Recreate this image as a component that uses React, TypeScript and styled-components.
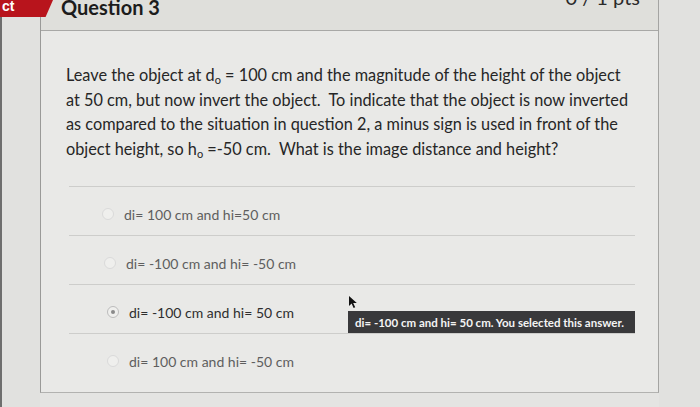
import * as React from "react";
import styled, { createGlobalStyle } from "styled-components";

interface IAnswer {
  id: number;
  text: string;
  selected?: boolean;
}

const answers: IAnswer[] = [
  { id: 1, text: "di= 100 cm and hi=50 cm" },
  { id: 2, text: "di= -100 cm and hi= -50 cm" },
  { id: 3, text: "di= -100 cm and hi= 50 cm", selected: true },
  { id: 4, text: "di= 100 cm and hi= -50 cm" },
];

const GlobalStyle = createGlobalStyle`
  html, body {
    margin: 0;
    padding: 0;
    background: #e4e4e2;
    font-family: Lato, "Open Sans", sans-serif;
    overflow: hidden;
  }
`;

export default function App() {
  const picked = answers.find((a) => a.selected);
  return (
    <>
      <GlobalStyle />
      <Page>
        <Tag>ct</Tag>
        <SideStrip />
        <Card>
          <Header>
            <Title>Question 3</Title>
            <Points>0 / 1 pts</Points>
          </Header>
          <Body>
            <QuestionText>
              Leave the object at d<sub>o</sub> = 100 cm and the magnitude of the height of the object
              <br />
              at 50 cm, but now invert the object.&nbsp; To indicate that the object is now inverted
              <br />
              as compared to the situation in question 2, a minus sign is used in front of the
              <br />
              object height, so h<sub>o</sub> =-50 cm.&nbsp; What is the image distance and height?
            </QuestionText>
            <AnswerList>
              {answers.map((a) => (
                <AnswerRow key={a.id} $shift={a.id > 2 ? 5 : a.id > 1 ? 2 : 0}>
                  <Radio $checked={!!a.selected} />
                  <AnswerLabel $checked={!!a.selected}>{a.text}</AnswerLabel>
                </AnswerRow>
              ))}
            </AnswerList>
          </Body>
          <Cursor viewBox="0 0 10 14">
            <path d="M1 1 L1 11 L3.6 8.6 L5.6 13 L7.2 12.2 L5.2 7.9 L8.8 7.9 Z" fill="#111" />
          </Cursor>
          {picked && <Tooltip>{picked.text}. You selected this answer.</Tooltip>}
        </Card>
        <RightStrip />
      </Page>
    </>
  );
}

const Page = styled.div`
  position: relative;
  display: flex;
  width: 700px;
  height: 407px;
  background: #e4e4e2;
`;

const Tag = styled.div`
  position: absolute;
  top: 0;
  left: 0;
  width: 53px;
  height: 17px;
  padding-left: 2px;
  box-sizing: border-box;
  background: #b8141c;
  color: #fff;
  font: 700 14px/13px "Liberation Sans", sans-serif;
  clip-path: polygon(0 0, 100% 0, 86% 100%, 0 100%);
  z-index: 2;
`;

const SideStrip = styled.div`
  width: 38px;
  border-left: 2px solid #6e6e6e;
  background: #e1e1df;
`;

const Card = styled.div`
  position: relative;
  width: 617px;
  height: 392px;
  background: #e9e9e7;
  border-left: 1px solid #9a9a98;
  border-right: 1px solid #a4a4a2;
  border-bottom: 1px solid #b2b2b0;
  display: flex;
  flex-direction: column;
`;

const Header = styled.div`
  height: 30px;
  display: flex;
  align-items: flex-start;
  justify-content: space-between;
  padding: 0 18px 0 20px;
  background: #dfdfdb;
  border-bottom: 1px solid #a8a8a6;
`;

const Title = styled.div`
  margin-top: -4px;
  font-size: 20px;
  font-weight: 700;
  color: #1c1c1c;
  line-height: 22px;
`;

const Points = styled.div`
  margin-top: -14px;
  font-size: 20px;
  color: #2a2a2a;
  line-height: 22px;
`;

const Body = styled.div`
  padding: 32px 23px 0 25px;
`;

const QuestionText = styled.p`
  margin: 0;
  font-size: 16.3px;
  line-height: 24.5px;
  color: #262626;
  white-space: nowrap;

  sub {
    font-size: 11px;
    line-height: 0;
    vertical-align: -3px;
  }
`;

const AnswerList = styled.ul`
  list-style: none;
  margin: 25px 0 0 3px;
  padding: 0;
`;

const AnswerRow = styled.li<{ $shift: number }>`
  display: flex;
  align-items: center;
  height: 49px;
  box-sizing: border-box;
  padding: 6px 0 0 ${(p) => 33 + p.$shift}px;
  border-top: 1px solid #cdcdcb;
`;

const Radio = styled.span<{ $checked: boolean }>`
  position: relative;
  width: 10px;
  height: 10px;
  border-radius: 50%;
  border: 1px solid ${(p) => (p.$checked ? "#bcbcbc" : "#dadada")};
  background: #efefed;

  &::after {
    content: "";
    display: ${(p) => (p.$checked ? "block" : "none")};
    position: absolute;
    top: 3px;
    left: 3px;
    width: 4px;
    height: 4px;
    border-radius: 50%;
    background: #8a8a8a;
  }
`;

const AnswerLabel = styled.span<{ $checked: boolean }>`
  margin-left: 10px;
  font-size: 14px;
  color: ${(p) => (p.$checked ? "#2e2e2e" : "#5e5e5e")};
`;

const Cursor = styled.svg`
  position: absolute;
  left: 307px;
  top: 295px;
  width: 10px;
  height: 14px;
`;

const Tooltip = styled.div`
  position: absolute;
  left: 307px;
  top: 311px;
  width: 287px;
  height: 22px;
  box-sizing: border-box;
  padding: 0 7px;
  display: flex;
  align-items: center;
  background: #39393b;
  color: #f4f4f4;
  font: 700 11.5px Lato, "Liberation Sans", sans-serif;
  white-space: nowrap;
`;

const RightStrip = styled.div`
  flex: 1;
  background: #e1e1df;
`;
